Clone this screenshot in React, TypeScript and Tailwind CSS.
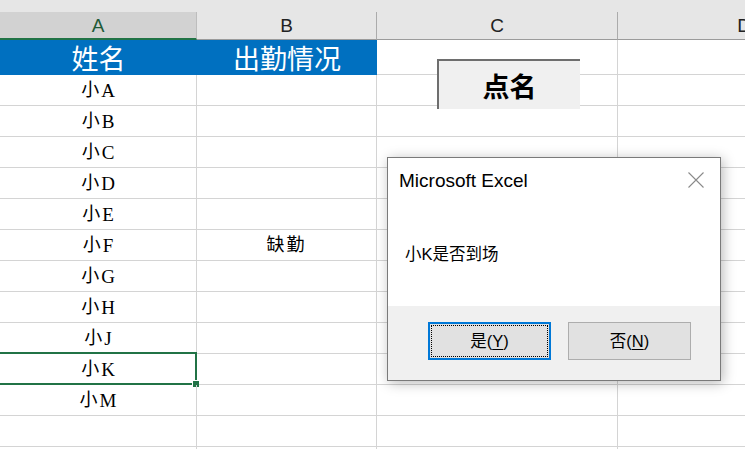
import React from "react";

const names = ["小A", "小B", "小C", "小D", "小E", "小F", "小G", "小H", "小J", "小K", "小M", "", ""];

export default function App() {
  return (
    <div className="relative w-[745px] h-[449px] overflow-hidden bg-white [font-family:'Liberation_Sans','Noto_Sans_CJK_SC',sans-serif]">
      {/* top strip */}
      <div className="h-[12px] bg-[#e6e6e6]" />
      {/* column headers */}
      <div className="flex h-[28px] text-[19px] leading-none">
        <div className="w-[197px] shrink-0 bg-[#d2d2d2] border-r border-[#bdbdbd] border-b-2 border-b-[#217346] flex items-center justify-center text-[#1f5a37]">
          A
        </div>
        <div className="w-[180px] shrink-0 bg-[#e6e6e6] border-r border-[#ababab] border-b border-b-[#9b9b9b] flex items-center justify-center text-[#222]">
          B
        </div>
        <div className="w-[241px] shrink-0 bg-[#e6e6e6] border-r border-[#ababab] border-b border-b-[#9b9b9b] flex items-center justify-center text-[#222]">
          C
        </div>
        <div className="flex-1 bg-[#e6e6e6] border-b border-b-[#9b9b9b] flex items-center justify-end text-[#222] pr-0">
          <span className="translate-x-[6px]">D</span>
        </div>
      </div>
      {/* row 1 */}
      <div className="flex h-[35px] text-[27px] text-white [font-family:'Noto_Sans_CJK_SC',sans-serif] leading-none">
        <div className="w-[197px] shrink-0 bg-[#0070c0] flex items-center justify-center">姓名</div>
        <div className="w-[180px] shrink-0 bg-[#0070c0] flex items-center justify-center">出勤情况</div>
        <div className="w-[241px] shrink-0 border-r border-b border-[#d4d4d4]" />
        <div className="flex-1 border-b border-[#d4d4d4]" />
      </div>
      {/* data rows */}
      {names.map((n, i) => (
        <div key={i} className="flex h-[31px] text-[19px] text-black [font-family:'Liberation_Serif','Noto_Sans_CJK_SC',serif] leading-none">
          <div className="relative w-[197px] shrink-0 border-r border-b border-[#d4d4d4] flex items-center justify-center">
            {n && (
              <>
                <span className="text-[18px] pr-[2px]">{n.slice(0, 1)}</span>
                <span>{n.slice(1)}</span>
              </>
            )}
            {i === 9 && (
              <>
                <div className="absolute -top-[2px] -left-[2px] -right-[1px] -bottom-[1px] border-2 border-[#217346]" />
                <div className="absolute left-[192px] top-[26px] w-[7px] h-[7px] bg-[#217346] border-l border-t border-white" />
              </>
            )}
          </div>
          <div className="w-[180px] shrink-0 border-r border-b border-[#d4d4d4] flex items-center justify-center tracking-[2px] text-[18px]">
            {i === 5 ? "缺勤" : ""}
          </div>
          <div className="w-[241px] shrink-0 border-r border-b border-[#d4d4d4]" />
          <div className="flex-1 border-b border-[#d4d4d4]" />
        </div>
      ))}

      {/* 点名 button */}
      <div className="absolute left-[437px] top-[59px] w-[143px] h-[50px] bg-[#f0f0f0] border-t-2 border-l-2 border-[#6e6e6e] flex items-center justify-center text-[27px] font-bold text-black [font-family:'Noto_Sans_CJK_SC',sans-serif] leading-none">
        点名
      </div>

      {/* dialog */}
      <div className="absolute left-[387px] top-[157px] w-[334px] h-[224px] border border-[#7a7a7a] bg-white flex flex-col shadow-[2px_2px_12px_rgba(0,0,0,0.28)]">
        <div className="h-[44px] flex items-center pl-[11px] text-[19px] text-black leading-none">
          Microsoft Excel
        </div>
        <svg className="absolute left-[300px] top-[14px]" width="16" height="16" viewBox="0 0 16 16">
          <path d="M0.5 0.5 L15.5 15.5 M15.5 0.5 L0.5 15.5" stroke="#8a8a8a" strokeWidth="1.1" fill="none" />
        </svg>
        <div className="flex-1 flex items-center pl-[17px] text-[16.5px] text-black leading-none">
          小K是否到场
        </div>
        <div className="h-[74px] bg-[#f0f0f0] flex items-start pl-[40px] pt-[16px] gap-[17px] text-[16.5px] text-black leading-none">
          <div className="relative w-[123px] h-[38px] border-2 border-[#0078d7] bg-[#e1e1e1] flex items-center justify-center">
            <div className="absolute inset-[1px] border border-dotted border-black" />
            <span>
              是(<span className="underline underline-offset-2">Y</span>)
            </span>
          </div>
          <div className="w-[123px] h-[38px] border border-[#adadad] bg-[#e1e1e1] flex items-center justify-center">
            <span>
              否(<span className="underline underline-offset-2">N</span>)
            </span>
          </div>
        </div>
      </div>
    </div>
  );
}
